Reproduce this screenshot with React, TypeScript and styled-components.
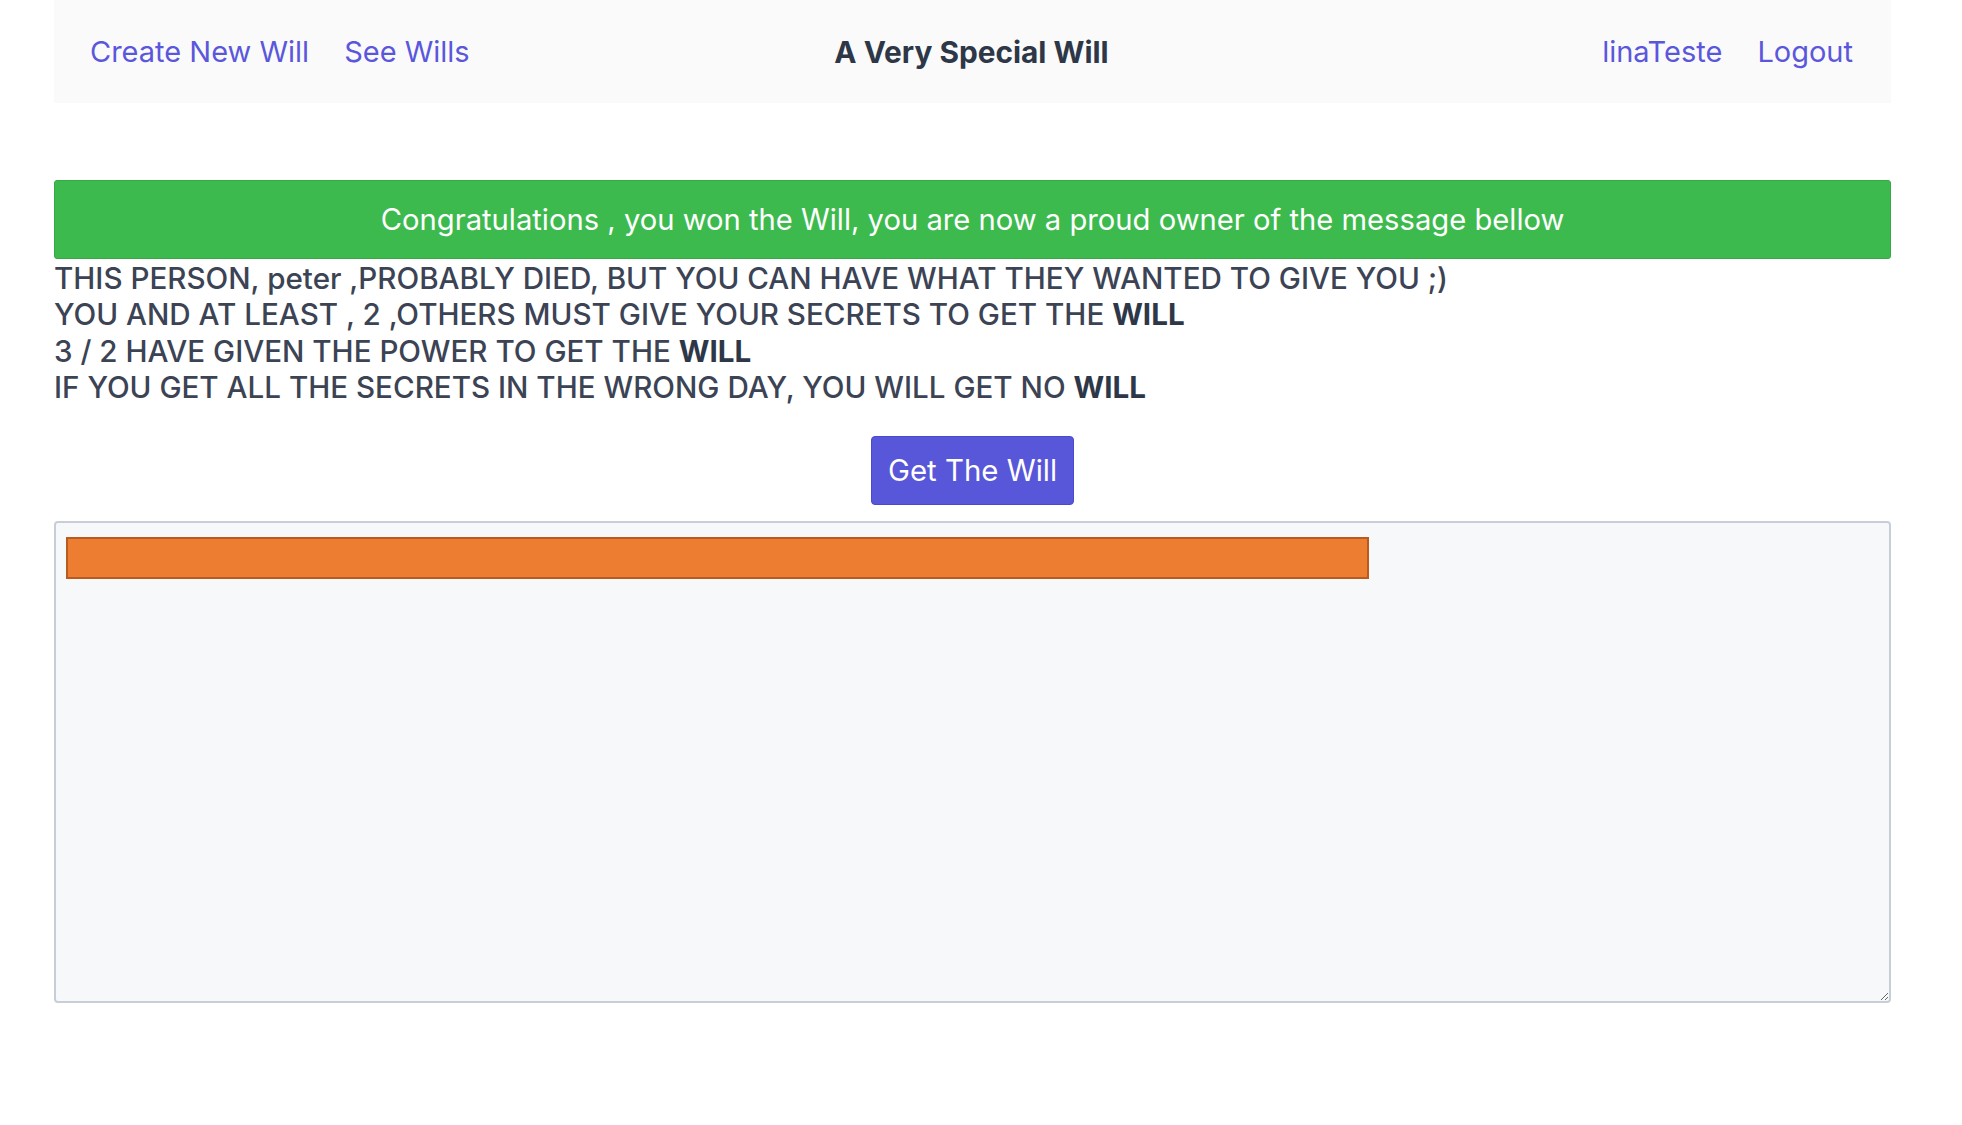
import styled, { createGlobalStyle } from "styled-components";

const GlobalStyle = createGlobalStyle`
    body {
        margin: 0;
        background: #ffffff;
        font-family: Inter, "Liberation Sans", sans-serif;
        color: #2d3748;
    }
`;

const Page = styled.div`
    width: 1837px;
    margin-left: 54px;
    display: flex;
    flex-direction: column;
`;

const NavBar = styled.nav`
    height: 103px;
    background-color: #fafafa;
    display: grid;
    grid-template-columns: 1fr auto 1fr;
    align-items: center;
    padding: 0 38px 0 36px;
`;

const NavGroup = styled.div<{ $align: "start" | "end" }>`
    display: flex;
    gap: 35px;
    justify-content: ${(p) => (p.$align === "end" ? "flex-end" : "flex-start")};
`;

const NavLink = styled.a`
    color: #5a57dc;
    font-size: 29px;
    text-decoration: none;
    cursor: pointer;
`;

const Title = styled.div`
    font-size: 29.8px;
    font-weight: 700;
    color: #2d3748;
`;

const Alert = styled.div`
    margin-top: 77px;
    height: 79px;
    box-sizing: border-box;
    background-color: #3dba4e;
    border: 1px solid #36a846;
    border-radius: 3px;
    color: #ffffff;
    font-size: 29.2px;
    display: flex;
    align-items: center;
    justify-content: center;
`;

const Message = styled.div`
    font-size: 29.6px;
    line-height: 36.3px;
    padding-top: 1px;
    color: #3b4354;
    font-weight: 500;
    & > b {
        font-weight: 700;
        color: #2d3748;
    }
`;

const ButtonRow = styled.div`
    display: flex;
    justify-content: center;
    margin-top: 31px;
`;

const Button = styled.button`
    width: 203px;
    height: 69px;
    padding: 0;
    background-color: #5856d9;
    border: 1px solid #4b49cc;
    border-radius: 4px;
    color: #ffffff;
    font-family: inherit;
    font-size: 29.4px;
    cursor: pointer;
`;

const EditorWrap = styled.div`
    position: relative;
    margin-top: 16px;
`;

const TextArea = styled.textarea`
    display: block;
    width: 100%;
    height: 482px;
    box-sizing: border-box;
    background-color: #f7f8fa;
    border: 2px solid #c8ced8;
    border-radius: 4px;
    resize: vertical;
    outline: none;
`;

const Highlight = styled.div`
    position: absolute;
    left: 12px;
    top: 16px;
    width: 1303px;
    height: 42px;
    box-sizing: border-box;
    background-color: #ed7d31;
    border: 2px solid #b95a1e;
`;

export default function App() {
    return (
        <>
            <GlobalStyle />
            <Page>
                <NavBar>
                    <NavGroup $align="start">
                        <NavLink>Create New Will</NavLink>
                        <NavLink>See Wills</NavLink>
                    </NavGroup>
                    <Title>A Very Special Will</Title>
                    <NavGroup $align="end">
                        <NavLink>linaTeste</NavLink>
                        <NavLink>Logout</NavLink>
                    </NavGroup>
                </NavBar>
                <Alert>Congratulations , you won the Will, you are now a proud owner of the message bellow</Alert>
                <Message>
                    THIS PERSON, peter ,PROBABLY DIED, BUT YOU CAN HAVE WHAT THEY WANTED TO GIVE YOU ;)
                    <br />
                    YOU AND AT LEAST , 2 ,OTHERS MUST GIVE YOUR SECRETS TO GET THE <b>WILL</b>
                    <br />
                    3 / 2 HAVE GIVEN THE POWER TO GET THE <b>WILL</b>
                    <br />
                    IF YOU GET ALL THE SECRETS IN THE WRONG DAY, YOU WILL GET NO <b>WILL</b>
                </Message>
                <ButtonRow>
                    <Button>Get The Will</Button>
                </ButtonRow>
                <EditorWrap>
                    <TextArea readOnly />
                    <Highlight />
                </EditorWrap>
            </Page>
        </>
    );
}
